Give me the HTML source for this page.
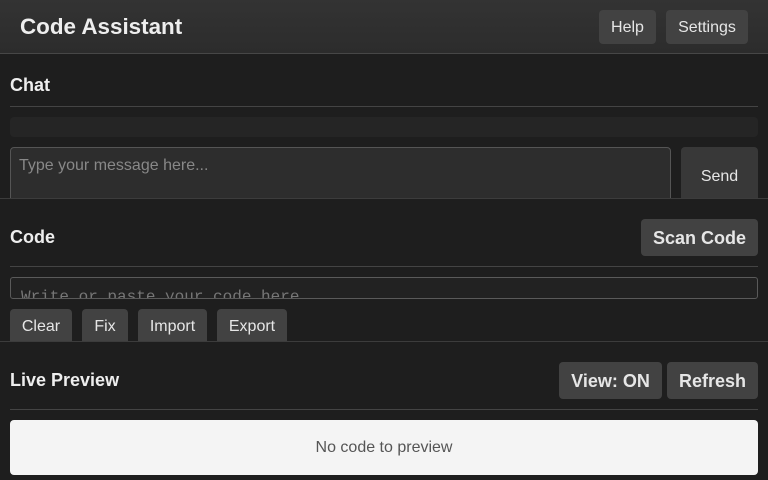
<!DOCTYPE html><html><head><style>
*{box-sizing:border-box;margin:0;padding:0}
body{width:768px;height:480px;overflow:hidden;background:#1e1e1e;font-family:"Liberation Sans",sans-serif;color:#e8e8e8;position:relative}
.a{position:absolute}
.btn{position:absolute;background:#424242;border-radius:4px;color:#e6e6e6;font-size:16px;display:flex;align-items:center;justify-content:center;padding-top:1px}
.line{position:absolute;left:10px;width:748px;height:1px;background:#444}
h2{position:absolute;font-size:18px;font-weight:bold;color:#eee}
</style></head><body>
<div class="a" style="left:0;top:0;width:768px;height:54px;background:linear-gradient(#333,#2c2c2c);border-bottom:1px solid #474747"></div>
<div class="a" style="left:20px;top:14px;font-size:22.4px;font-weight:bold;color:#eee">Code Assistant</div>
<div class="btn" style="left:599px;top:10px;width:57px;height:34px">Help</div>
<div class="btn" style="left:666px;top:10px;width:82px;height:34px">Settings</div>

<h2 style="left:10px;top:75px">Chat</h2>
<div class="line" style="top:106px"></div>
<div class="a" style="left:10px;top:117px;width:748px;height:20px;background:#252525;border-radius:4px"></div>
<div class="a" style="left:10px;top:147px;width:661px;height:60px;background:#2d2d2d;border:1px solid #555;border-radius:4px;padding:9px 8px;color:#888;font-size:16px">Type your message here...</div>
<div class="btn" style="left:681px;top:147px;width:77px;height:60px;background:#383838;align-items:flex-start;padding-top:21px">Send</div>

<div class="a" style="left:0;top:198px;width:768px;height:282px;background:#1e1e1e;border-top:1px solid #3c3c3c"></div>
<h2 style="left:10px;top:227px">Code</h2>
<div class="btn" style="left:641px;top:219px;width:117px;height:37px;font-weight:bold;font-size:18px">Scan Code</div>
<div class="line" style="top:266px"></div>
<div class="a" style="left:10px;top:277px;width:748px;height:22px;border:1px solid #5a5a5a;border-radius:3px;background:#222;overflow:hidden;padding:9px 0 0 10px;font-family:'Liberation Mono',monospace;font-size:16px;color:#777;line-height:20px">Write or paste your code here</div>
<div class="btn" style="left:10px;top:309px;width:62px;height:40px;align-items:flex-start;padding-top:9px">Clear</div>
<div class="btn" style="left:82px;top:309px;width:46px;height:40px;align-items:flex-start;padding-top:9px">Fix</div>
<div class="btn" style="left:138px;top:309px;width:69px;height:40px;align-items:flex-start;padding-top:9px">Import</div>
<div class="btn" style="left:217px;top:309px;width:70px;height:40px;align-items:flex-start;padding-top:9px">Export</div>

<div class="a" style="left:0;top:341px;width:768px;height:139px;background:#1e1e1e;border-top:1px solid #3c3c3c"></div>
<h2 style="left:10px;top:370px">Live Preview</h2>
<div class="btn" style="left:559px;top:362px;width:103px;height:37px;font-weight:bold;font-size:18px">View: ON</div>
<div class="btn" style="left:667px;top:362px;width:91px;height:37px;font-weight:bold;font-size:18px">Refresh</div>
<div class="line" style="top:409px"></div>
<div class="a" style="left:10px;top:420px;width:748px;height:55px;background:#f4f4f4;border-radius:4px;display:flex;align-items:center;justify-content:center;color:#555;font-size:16px;padding-top:1px">No code to preview</div>
</body></html>
